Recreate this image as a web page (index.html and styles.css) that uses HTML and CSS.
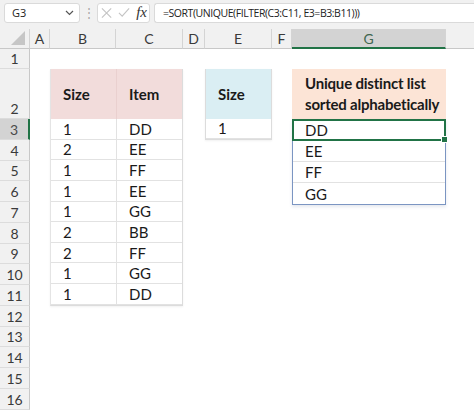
FILE: index.html
```html
<!DOCTYPE html>
<html lang="en">
<head>
    <meta charset="UTF-8">
    <title>SORT UNIQUE FILTER</title>
    <link rel="stylesheet" href="styles.css">
</head>
<body>
    <!-- formula bar -->
    <div class="formula-bar">
        <div class="name-box">
            <span>G3</span>
            <svg class="chevron" width="9" height="6" viewBox="0 0 9 6"><path d="M1 1 L4.5 4.5 L8 1" fill="none" stroke="#555" stroke-width="1.2"/></svg>
        </div>
        <div class="grip">&#8942;</div>
        <div class="fx-buttons">
            <svg width="12" height="12" viewBox="0 0 12 12"><path d="M1 1 L11 11 M11 1 L1 11" stroke="#c4c4c4" stroke-width="1.2"/></svg>
            <svg width="13" height="11" viewBox="0 0 13 11"><path d="M1 6 L4.5 9.5 L12 1" fill="none" stroke="#c4c4c4" stroke-width="1.2"/></svg>
            <span class="fx">fx</span>
        </div>
        <div class="formula">=SORT(UNIQUE(FILTER(C3:C11, E3=B3:B11)))</div>
    </div>

    <!-- worksheet -->
    <div class="sheet">
        <div class="corner">
            <svg width="14" height="14" viewBox="0 0 14 14"><polygon points="14,0 14,14 0,14" fill="#c6c6c6"/></svg>
        </div>
        <div class="col-head">A</div>
        <div class="col-head">B</div>
        <div class="col-head">C</div>
        <div class="col-head">D</div>
        <div class="col-head">E</div>
        <div class="col-head">F</div>
        <div class="col-head selected">G</div>
        <div class="col-head rest"></div>

        <div class="row-head">1</div>
        <div class="row-head tall">2</div>
        <div class="row-head selected">3</div>
        <div class="row-head">4</div>
        <div class="row-head">5</div>
        <div class="row-head">6</div>
        <div class="row-head">7</div>
        <div class="row-head">8</div>
        <div class="row-head">9</div>
        <div class="row-head">10</div>
        <div class="row-head">11</div>
        <div class="row-head">12</div>
        <div class="row-head">13</div>
        <div class="row-head">14</div>
        <div class="row-head">15</div>
        <div class="row-head">16</div>

        <!-- data table B2:C11 -->
        <div class="tbl tbl-data">
            <div class="cell th pink">Size</div>
            <div class="cell th pink">Item</div>
            <div class="cell">1</div><div class="cell">DD</div>
            <div class="cell">2</div><div class="cell">EE</div>
            <div class="cell">1</div><div class="cell">FF</div>
            <div class="cell">1</div><div class="cell">EE</div>
            <div class="cell">1</div><div class="cell">GG</div>
            <div class="cell">2</div><div class="cell">BB</div>
            <div class="cell">2</div><div class="cell">FF</div>
            <div class="cell">1</div><div class="cell">GG</div>
            <div class="cell">1</div><div class="cell">DD</div>
        </div>

        <!-- criteria E2:E3 -->
        <div class="tbl tbl-crit">
            <div class="cell th blue">Size</div>
            <div class="cell">1</div>
        </div>

        <!-- result G2:G6 -->
        <div class="tbl-result">
            <div class="cell th peach">Unique distinct list<br>sorted alphabetically</div>
            <div class="spill">
                <div class="cell active">DD<span class="handle"></span></div>
                <div class="cell">EE</div>
                <div class="cell">FF</div>
                <div class="cell">GG</div>
            </div>
        </div>
    </div>
</body>
</html>
```

FILE: styles.css
```css
/* base */
body {
    margin: 0;
    width: 474px;
    height: 411px;
    overflow: hidden;
    background: #fff;
    font-family: Lato, "Liberation Sans", sans-serif;
    color: #1a1a1a;
}

/* formula bar */
.formula-bar {
    display: flex;
    align-items: center;
    height: 29px;
    padding: 0 0 4px 4px;
    box-sizing: border-box;
    background: #f1f1f1;
    font-family: "Open Sans", "Liberation Sans", sans-serif;
    font-size: 11px;
    color: #222;
}

.name-box {
    display: flex;
    align-items: center;
    justify-content: space-between;
    width: 76px;
    height: 20px;
    padding: 0 5px 0 7px;
    box-sizing: border-box;
    background: #fff;
    border: 1px solid #dadada;
    border-radius: 3px;
}

.grip {
    width: 17px;
    text-align: center;
    color: #a8a8a8;
    font-size: 12px;
}

.fx-buttons {
    display: flex;
    align-items: center;
    gap: 6px;
    height: 20px;
    width: 53px;
    padding: 0 2px 0 3px;
    box-sizing: border-box;
    background: #fff;
    border: 1px solid #dadada;
    border-radius: 3px;
}

.fx {
    font-family: "Liberation Serif", serif;
    font-style: italic;
    font-size: 15px;
    color: #333;
}

.formula {
    flex: 1;
    height: 20px;
    line-height: 18px;
    margin-left: 4px;
    padding-left: 8px;
    box-sizing: border-box;
    background: #fff;
    border: 1px solid #dadada;
    border-right: none;
    border-radius: 3px 0 0 3px;
    font-size: 10.5px;
    letter-spacing: -0.45px;
}

/* sheet grid */
.sheet {
    display: grid;
    grid-template-columns: 30px 20px 66px 67px 22px 67px 20px 154px 1fr;
    grid-template-rows: 20px 20px 50px repeat(14, 20.75px);
}

.corner {
    display: flex;
    align-items: flex-end;
    justify-content: flex-end;
    padding: 0 4px 3px 0;
    background: #f1f1f1;
    border-right: 1px solid #d4d4d4;
    border-bottom: 1px solid #c8c8c8;
}

.col-head {
    display: flex;
    align-items: center;
    justify-content: center;
    background: #f1f1f1;
    border-right: 1px solid #d4d4d4;
    border-bottom: 1px solid #c8c8c8;
    font-size: 14px;
    color: #3a3a3a;
}

.col-head.selected {
    background: #d3d3d3;
    color: #416650;
    border-bottom: 2px solid #217346;
}

.col-head.rest {
    border-right: none;
}

.row-head {
    grid-column: 1;
    display: flex;
    align-items: flex-end;
    justify-content: center;
    padding-bottom: 1px;
    background: #f1f1f1;
    border-right: 1px solid #c8c8c8;
    border-bottom: 1px solid #dcdcdc;
    font-size: 14px;
    color: #3a3a3a;
}

.row-head.selected {
    background: #d3d3d3;
    color: #4a4a4a;
    border-right: 2px solid #217346;
}

/* tables */
.tbl {
    display: grid;
    border: 1px solid #dcdcdc;
    box-shadow: 0 1px 2px rgba(0, 0, 0, 0.06);
}

.tbl-data {
    grid-column: 3 / 5;
    grid-row: 3 / 13;
    grid-template-columns: 66px 1fr;
    grid-template-rows: 50px repeat(9, 1fr);
    border-top: none;
    border-left: 1px solid #e4e4e4;
}

.tbl-crit {
    grid-column: 6;
    grid-row: 3 / 5;
    grid-template-rows: 50px 1fr;
    border-top: none;
}

.cell {
    display: flex;
    align-items: center;
    padding-left: 12px;
    font-size: 15px;
    border-right: 1px solid #e2e2e2;
    border-bottom: 1px solid #e2e2e2;
}

.tbl .cell:nth-child(2n),
.tbl-crit .cell {
    border-right: none;
}

.cell.th {
    font-weight: bold;
    line-height: 21px;
    border-bottom: none;
}

.pink {
    background: #f2dcdb;
    border-right-color: #ead0cf;
}

.blue {
    background: #daeef3;
}

.peach {
    background: #fce4d6;
    height: 50px;
    box-sizing: border-box;
    padding-left: 13px;
    border-right: none;
    letter-spacing: -0.2px;
}

/* result spill range */
.tbl-result {
    grid-column: 8;
    grid-row: 3 / 8;
    display: grid;
    grid-template-rows: 50px 1fr;
}

.spill {
    display: grid;
    grid-template-rows: repeat(4, 1fr);
    border: 1px solid #7b95c2;
    box-shadow: 0 2px 3px rgba(80, 100, 140, 0.15);
}

.spill .cell {
    border-right: none;
    padding-left: 12px;
}

.spill .cell:last-child {
    border-bottom: none;
}

.spill .cell.active {
    position: relative;
    margin: -1px -1px 0 -1px;
    border: 2px solid #217346;
    padding-left: 11px;
}

.handle {
    position: absolute;
    right: -4px;
    bottom: -4px;
    width: 5px;
    height: 5px;
    background: #217346;
    border: 1px solid #fff;
}
```
